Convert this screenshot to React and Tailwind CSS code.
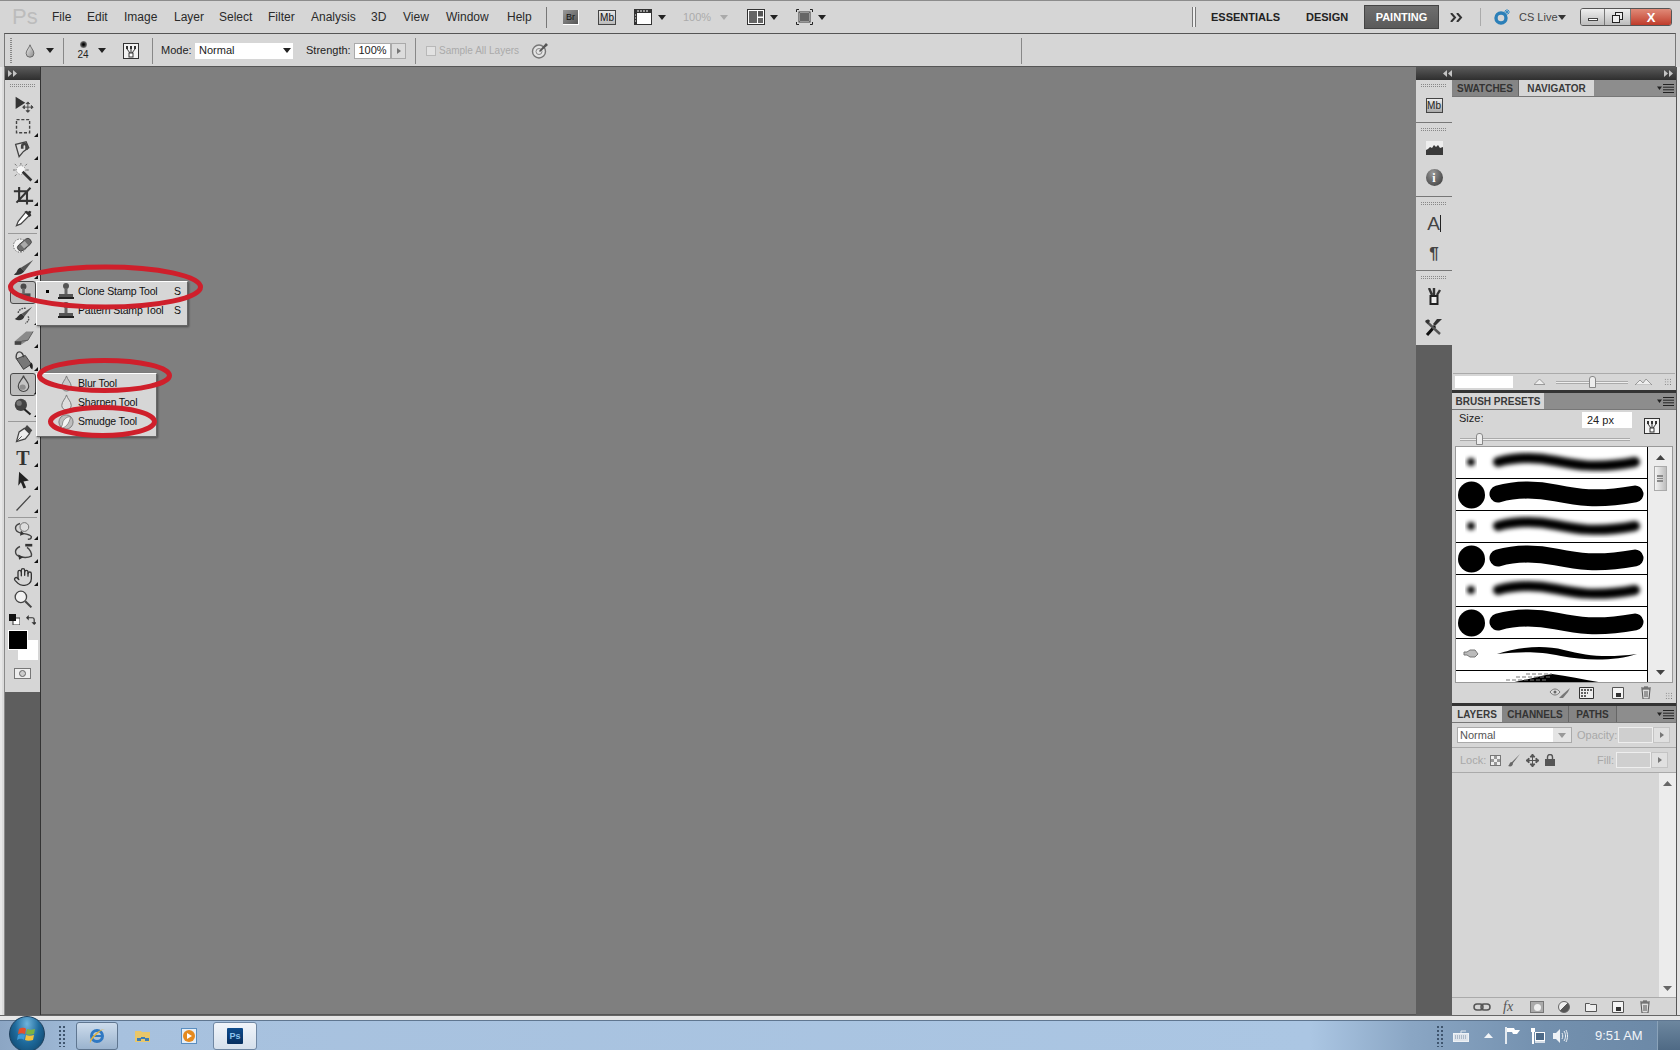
import { Hand } from "lucide-react";

const FONT = "font-['Liberation_Sans',Arial,sans-serif]";

const MENUS = [
    { label: "File", width: "w-[35px]" },
    { label: "Edit", width: "w-[37px]" },
    { label: "Image", width: "w-[50px]" },
    { label: "Layer", width: "w-[45px]" },
    { label: "Select", width: "w-[49px]" },
    { label: "Filter", width: "w-[43px]" },
    { label: "Analysis", width: "w-[60px]" },
    { label: "3D", width: "w-[32px]" },
    { label: "View", width: "w-[43px]" },
    { label: "Window", width: "w-[61px]" },
    { label: "Help", width: "w-[29px]" },
];

const Arrow = ({ className = "", color = "#222" }) => (
    <svg viewBox="0 0 8 5" className={`w-[8px] h-[5px] shrink-0 ${className}`}>
        <path d="M0 0h8L4 5z" fill={color} />
    </svg>
);

const Drop = ({ size = 18, stroke = "#555", fill = "url(#dropFill)" }) => (
    <svg viewBox="0 0 18 18" width={size} height={size}>
        <defs>
            <linearGradient id="dropFill" x1="0" y1="0" x2="1" y2="1">
                <stop offset="0" stopColor="#eee" />
                <stop offset="1" stopColor="#8a8a8a" />
            </linearGradient>
        </defs>
        <path d="M9 1C8 5 4 8 4 12a5 5 0 0 0 10 0C14 8 10 5 9 1z" fill={fill} stroke={stroke} />
    </svg>
);

const Stamp = ({ size = 20 }) => (
    <svg viewBox="0 0 20 20" width={size} height={size}>
        <circle cx="10" cy="4" r="3" fill="#555" />
        <rect x="8.5" y="6" width="3" height="6" fill="#666" />
        <rect x="3" y="12" width="14" height="3" fill="#555" />
        <rect x="2" y="15" width="16" height="2" fill="#222" />
    </svg>
);

const Smudge = ({ size = 18 }) => (
    <svg viewBox="0 0 18 18" width={size} height={size}>
        <circle cx="9" cy="9" r="8" fill="#bdbdbd" stroke="#777" />
        <path d="M14 3C9 3 5 7 5 12l-2 4c5 0 10-5 11-13z" fill="#f4f4f4" stroke="#666" strokeWidth="0.7" />
    </svg>
);

const BrushTip = ({ size = 16 }) => (
    <svg viewBox="0 0 16 16" width={size} height={size}>
        <rect x="0.5" y="0.5" width="15" height="15" fill="#f2f2f2" stroke="#333" />
        <path d="M3 3h2v3H3zM7 3h2v3H7zM11 3h2v3h-2z" fill="#333" />
        <path d="M4 6l3 4M8 6v4M12 6l-3 4" stroke="#333" />
        <rect x="6" y="10" width="4" height="4" fill="#fff" stroke="#333" />
    </svg>
);

const TOOLS = {
    move: (
        <>
            <path d="M3 3l11 7-11 7z" fill="#333" />
            <path d="M17 10v10M12 15h10M17 9l-2 2h4zM17 21l-2-2h4zM11 15l2-2v4zM23 15l-2-2v4z" stroke="#444" strokeWidth="1" fill="#444" />
        </>
    ),
    marquee: <rect x="4" y="3" width="15" height="15" fill="none" stroke="#444" strokeWidth="1.6" strokeDasharray="3.5 2" />,
    lasso: (
        <>
            <path d="M3 5l12-3 3 7-6 4-5 6z" fill="#ddd" stroke="#444" strokeWidth="1.5" />
            <path d="M9 7a4 4 0 0 1 8 0v4h-3V7a1 1 0 0 0-2 0v3H9z" fill="#444" />
        </>
    ),
    wand: (
        <>
            <circle cx="9" cy="8" r="5" fill="#f7f7f7" stroke="#888" strokeDasharray="1.5 1.5" />
            <path d="M3 8H0M9 2V0M15 8h3M4 3L2 1M14 3l2-2M4 13l-2 2" stroke="#666" />
            <path d="M11 10l10 10" stroke="#333" strokeWidth="3" />
        </>
    ),
    crop: (
        <path d="M7 1v16h16M1 6h15v15M20 2L4 19" fill="none" stroke="#333" strokeWidth="2.4" />
    ),
    dropper: (
        <>
            <path d="M15 3l4 4-10 10-5 2 2-5z" fill="#fff" stroke="#444" strokeWidth="1.4" />
            <path d="M13 3l6 6 2-2-1-2 1-2-2-1-2 1-1-1z" fill="#333" />
        </>
    ),
    heal: (
        <>
            <circle cx="8" cy="11" r="7.5" fill="#f5f5f5" stroke="#555" strokeDasharray="1.6 1.6" />
            <rect x="4" y="6" width="18" height="8" rx="4" transform="rotate(-40 13 10)" fill="#6e6e6e" stroke="#444" />
            <rect x="10" y="7" width="6" height="6" transform="rotate(-40 13 10)" fill="#aaa" />
        </>
    ),
    brush: (
        <>
            <path d="M23 1L9 10l4 4z" fill="#555" />
            <path d="M9 10c-3 0-4 3-5 5l-3 3c5 1 10-1 12-4z" fill="#333" />
        </>
    ),
    stamp: (
        <>
            <circle cx="12" cy="5" r="3.4" fill="#4a4a4a" />
            <rect x="10.5" y="7" width="3" height="6" fill="#666" />
            <rect x="4" y="13" width="16" height="4" fill="#4a4a4a" />
        </>
    ),
    history: (
        <>
            <path d="M22 2L10 10l3 3z" fill="#555" />
            <path d="M10 10c-3 0-4 4-8 6 5 3 10 1 11-3z" fill="#333" />
            <path d="M6 9c0-4 6-6 9-5M17 13c2 2 1 6-3 8" fill="none" stroke="#555" strokeWidth="1.6" strokeDasharray="2 1" />
        </>
    ),
    eraser: (
        <>
            <path d="M2 15L15 4h8l-6 10-8 5H2z" fill="#8a8a8a" />
            <path d="M2 15h8l-1 4H2z" fill="#444" />
            <path d="M10 15l7-1 6-10" fill="none" stroke="#555" />
        </>
    ),
    bucket: (
        <>
            <path d="M4 9l10-4 7 10-9 6z" fill="#777" stroke="#333" />
            <path d="M4 9c-1-3 0-8 3-8s5 3 5 6" fill="none" stroke="#444" strokeWidth="1.6" />
            <path d="M21 13c2 2 2 5 1 8-2-1-3-3-3-5z" fill="#222" />
        </>
    ),
    blur: (
        <>
            <path d="M12 2C11 6 6 9 6 14a6 6 0 0 0 12 0C18 9 13 6 12 2z" fill="#c4c4c4" stroke="#444" strokeWidth="1.3" />
            <ellipse cx="11" cy="15" rx="3.5" ry="3" fill="#8d8d8d" />
        </>
    ),
    burn: (
        <>
            <circle cx="9" cy="9" r="7" fill="#444" />
            <circle cx="7" cy="7" r="3" fill="#777" />
            <path d="M13 14l7 6" stroke="#222" strokeWidth="2.4" />
        </>
    ),
    pen: (
        <>
            <path d="M4 20l3-11 6-4 6 6-5 6z" fill="#eee" stroke="#444" strokeWidth="1.4" />
            <path d="M13 5l3-4 6 6-3 4z" fill="#444" />
            <path d="M4 20l6-6" stroke="#444" />
        </>
    ),
    select: <path d="M7 2l11 10-6 1 3 7-3 1-3-7-3 4z" fill="#222" />,
    line: <path d="M4 20L20 3" stroke="#444" strokeWidth="1.5" />,
    rotate: (
        <>
            <circle cx="13" cy="8" r="5" fill="#ddd" stroke="#666" />
            <path d="M8 4C1 6 1 13 9 15c5 1 10 1 12 4 0 2-2 3-4 3" fill="none" stroke="#444" strokeWidth="1.6" />
            <path d="M9 12l-1 6 5-2z" fill="#333" />
        </>
    ),
    orbit: (
        <>
            <path d="M8 4C1 7 1 14 9 16c5 1 10 0 12-1 1-3-2-8-5-10" fill="none" stroke="#444" strokeWidth="1.6" />
            <path d="M6 13l1 6 5-3z" fill="#333" />
            <rect x="14" y="1" width="8" height="3" fill="#333" />
        </>
    ),
    zoom: (
        <>
            <circle cx="9" cy="9" r="6.5" fill="#f2f2f2" stroke="#444" strokeWidth="1.5" />
            <path d="M14 14l7 7" stroke="#444" strokeWidth="2.4" />
        </>
    ),
};

const Tool = ({ name, children, selected, noCorner }) => (
    <div className="relative h-[23px] flex items-center justify-center">
        {selected && (
            <div className="absolute left-[5px] top-0 w-[26px] h-[23px] rounded-[3px] border border-[#4a4a4a] bg-[#bdbdbd]" />
        )}
        <div className="relative ml-[1px] w-[21px] h-[21px] flex items-center justify-center">
            {children || (
                <svg viewBox="0 0 24 24" className="w-[21px] h-[21px]">
                    {TOOLS[name]}
                </svg>
            )}
        </div>
        {!noCorner && (
            <svg viewBox="0 0 4 4" className="absolute left-[29px] bottom-[2px] w-[4px] h-[4px]">
                <path d="M4 0v4H0z" fill="#111" />
            </svg>
        )}
    </div>
);

const ToolSep = () => <div className="mx-[3px] mt-[2px] mb-[1px] h-px bg-[#9a9a9a]" />;

const Grip = ({ className = "" }) => (
    <div className={`flex flex-col gap-[1px] items-center ${className}`}>
        <div className="w-[26px] h-[1px] bg-[repeating-linear-gradient(90deg,#888_0_1px,transparent_1px_2px)]" />
        <div className="w-[26px] h-[1px] bg-[repeating-linear-gradient(90deg,#888_0_1px,transparent_1px_2px)]" />
    </div>
);

const Toolbar = () => (
    <div className="w-[36px] shrink-0 flex flex-col bg-[#5e5e5e] border-r border-r-[#333]">
        <div className="h-[13px] bg-linear-to-b from-[#5a5a5a] to-[#2f2f2f] flex items-center pl-[3px]">
            <DoubleArrows dir="right" />
        </div>
        <div className="h-[612px] bg-[#d6d6d6] flex flex-col">
            <Grip className="mt-[4px] mb-[6px]" />
            <Tool name="move" noCorner />
            <Tool name="marquee" />
            <Tool name="lasso" />
            <Tool name="wand" />
            <Tool name="crop" />
            <Tool name="dropper" />
            <ToolSep />
            <Tool name="heal" />
            <Tool name="brush" />
            <Tool name="stamp" selected />
            <Tool name="history" />
            <Tool name="eraser" />
            <Tool name="bucket" />
            <Tool name="blur" selected />
            <Tool name="burn" />
            <ToolSep />
            <Tool noCorner={false}>
                <svg viewBox="0 0 24 24" className="w-[21px] h-[21px]">{TOOLS.pen}</svg>
            </Tool>
            <Tool>
                <span className="font-['Liberation_Serif',serif] font-bold text-[20px] leading-none text-[#333]">T</span>
            </Tool>
            <Tool name="select" />
            <Tool name="line" />
            <ToolSep />
            <Tool name="rotate" />
            <Tool name="orbit" />
            <Tool>
                <Hand className="w-[20px] h-[20px] text-[#333]" strokeWidth={1.6} />
            </Tool>
            <Tool name="zoom" noCorner />
            {/* default colours + swap */}
            <div className="mt-[1px] h-[15px] flex items-center pl-[4px] gap-[6px]">
                <svg viewBox="0 0 11 11" className="w-[11px] h-[11px]">
                    <rect x="4" y="4" width="7" height="7" fill="#fff" stroke="#333" />
                    <rect x="0" y="0" width="7" height="7" fill="#111" />
                </svg>
                <svg viewBox="0 0 11 11" className="w-[10px] h-[10px]">
                    <path d="M2 3h5a2 2 0 0 1 2 2v4" fill="none" stroke="#333" strokeWidth="1.3" />
                    <path d="M3 0v6L0 3zM6 8h6l-3 3z" fill="#333" />
                </svg>
            </div>
            {/* foreground / background swatches */}
            <div className="relative mt-[3px] h-[31px]">
                <div className="absolute left-[13px] top-[10px] w-[20px] h-[20px] bg-white" />
                <div className="absolute left-[3px] top-0 w-[20px] h-[20px] bg-black border border-white" />
            </div>
            <div className="ml-[9px] mt-[7px] w-[17px] h-[11px] bg-[#eee] border border-[#777] flex items-center justify-center">
                <div className="w-[7px] h-[7px] rounded-full border border-[#666] bg-[#ccc]" />
            </div>
        </div>
    </div>
);

const DoubleArrows = ({ dir }) => (
    <svg viewBox="0 0 9 7" className="w-[9px] h-[7px]">
        {dir === "right" ? (
            <path d="M0 0l4 3.5L0 7zM5 0l4 3.5L5 7z" fill="#c4c4c4" />
        ) : (
            <path d="M4 0v7L0 3.5zM9 0v7L5 3.5z" fill="#c4c4c4" />
        )}
    </svg>
);

const PanelMenu = () => (
    <svg viewBox="0 0 17 9" className="w-[17px] h-[9px]">
        <path d="M0 2.5h5L2.5 6z" fill="#222" />
        <path d="M6 .5h11M6 3.2h11M6 5.8h11M6 8.5h11" stroke="#222" />
    </svg>
);

const Tab = ({ label, active, width }) => (
    <div
        className={`${width} h-full flex items-center justify-center text-[10px] font-bold whitespace-nowrap ${
            active
                ? "bg-[#d6d6d6] text-[#3a3a3a]"
                : "bg-[#858585] text-[#333] border-r border-r-[#666]"
        }`}
    >
        {label}
    </div>
);

const TabBar = ({ children }) => (
    <div className="h-[17px] shrink-0 flex items-stretch bg-[#8d8d8d] border-b border-b-[#777]">
        {children}
        <div className="ml-auto mr-[1px] flex items-center pr-[1px]">
            <PanelMenu />
        </div>
    </div>
);

const ResizeGrip = () => (
    <div className="w-[8px] h-[8px] bg-[radial-gradient(#777_40%,transparent_45%)] bg-size-[2.6px_2.6px]" />
);

const Slider = ({ width, thumb }) => (
    <div className={`relative ${width} h-[3px] bg-[#eee] border-y border-y-[#aaa]`}>
        <div className={`absolute ${thumb} -top-[6px] w-[7px] h-[12px] bg-[#eee] border border-[#888] rounded-t-[3px]`} />
    </div>
);

const WAVE = "M42 15C60 10 80 10 100 14S140 22 179 15";

const BrushRow = ({ kind }) => (
    <div className="h-[32px] shrink-0 border-b border-b-black bg-white">
        <svg viewBox="0 0 191 31" className="w-[191px] h-[31px] block">
            <defs>
                <filter id="softBlur" x="-20%" y="-100%" width="140%" height="300%">
                    <feGaussianBlur stdDeviation="2" />
                </filter>
            </defs>
            {kind === "soft" ? (
                <>
                    <circle cx="15" cy="15" r="4" fill="#000" filter="url(#softBlur)" />
                    <path d={WAVE} fill="none" stroke="#000" strokeWidth="10" strokeLinecap="round" filter="url(#softBlur)" />
                </>
            ) : (
                <>
                    <circle cx="15.5" cy="16" r="13.5" fill="#000" />
                    <path d={WAVE} fill="none" stroke="#000" strokeWidth="17" strokeLinecap="round" />
                </>
            )}
        </svg>
    </div>
);

const BrushList = () => (
    <div className="h-[238px] mx-[3px] flex border border-[#999] bg-[#ececec] overflow-hidden">
        <div className="w-[192px] shrink-0 flex flex-col border-r border-r-black bg-white">
            <BrushRow kind="soft" />
            <BrushRow kind="hard" />
            <BrushRow kind="soft" />
            <BrushRow kind="hard" />
            <BrushRow kind="soft" />
            <BrushRow kind="hard" />
            <div className="h-[32px] shrink-0 border-b border-b-black">
                <svg viewBox="0 0 191 31" className="w-[191px] h-[31px] block">
                    <path d="M8 13h3l3-2h5l3 4-3 3h-5l-3-2H8z" fill="#bbb" stroke="#777" />
                    <path d="M41 15C60 9 85 5 108 11S150 19 181 15C160 22 130 22 105 17S65 13 41 15z" fill="#000" />
                </svg>
            </div>
            <div className="h-[13px] shrink-0">
                <svg viewBox="0 0 191 13" className="w-[191px] h-[13px] block">
                    <path d="M50 12c16-1 30-7 46-9 18 2 36 7 54 9z" fill="#000" />
                    <path d="M60 6h36M70 3h26M50 9h40" stroke="#777" strokeDasharray="4 2" />
                    <path d="M6 12h16" stroke="#777" strokeWidth="2" />
                </svg>
            </div>
        </div>
        <div className="flex-1 flex flex-col items-center">
            <svg viewBox="0 0 9 5" className="mt-[8px] w-[9px] h-[5px]"><path d="M0 5l4.5-5L9 5z" fill="#444" /></svg>
            <div className="mt-[6px] w-[13px] h-[25px] bg-linear-to-r from-[#f4f4f4] to-[#bdbdbd] border border-[#aaa] flex items-center justify-center">
                <div className="w-[6px] h-[7px] border-y-2 border-y-[#888] bg-[linear-gradient(#888,#888)] bg-size-[6px_1px] bg-center bg-no-repeat" />
            </div>
            <svg viewBox="0 0 9 5" className="mt-auto mb-[7px] w-[9px] h-[5px]"><path d="M0 0l4.5 5L9 0z" fill="#444" /></svg>
        </div>
    </div>
);

const TrashIcon = () => (
    <svg viewBox="0 0 12 13" className="w-[12px] h-[13px]">
        <path d="M2 3h8l-1 10H3z" fill="#ddd" stroke="#555" />
        <path d="M1 2h10M4 1h4M5 5v6M7 5v6" stroke="#555" />
    </svg>
);

const NewIcon = () => (
    <svg viewBox="0 0 12 12" className="w-[12px] h-[12px]">
        <path d="M.5.5h11v11H.5z" fill="#f4f4f4" stroke="#555" />
        <path d="M4 6h5v4H4z" fill="#333" />
    </svg>
);

const RightDock = () => (
    <div className="w-[260px] shrink-0 flex flex-col">
        <div className="h-[13px] shrink-0 bg-linear-to-b from-[#5a5a5a] to-[#2f2f2f] flex items-center justify-between pl-[27px] pr-[3px]">
            <DoubleArrows dir="left" />
            <DoubleArrows dir="right" />
        </div>
        <div className="flex-1 flex min-h-0">
            {/* collapsed icon strip */}
            <div className="w-[36px] shrink-0 flex flex-col bg-[#5e5e5e]">
                <div className="h-[43px] bg-[#d6d6d6] border-b border-b-[#777] flex flex-col items-center">
                    <Grip className="mt-[4px]" />
                    <div className="mt-[11px] relative w-[17px] h-[15px] bg-linear-to-b from-[#eee] to-[#aaa] border border-[#444] text-[10px] leading-[14px] text-center text-[#222]">
                        Mb
                    </div>
                </div>
                <div className="h-[74px] bg-[#d6d6d6] border-b border-b-[#777] flex flex-col items-center">
                    <Grip className="mt-[5px]" />
                    <svg viewBox="0 0 17 14" className="mt-[10px] w-[17px] h-[14px]">
                        <rect width="17" height="14" fill="#eee" />
                        <path d="M0 14V9l2-1 2-2 2 1 2-3 2 2 2-2 2 3 3-1v8z" fill="#3a3a3a" />
                    </svg>
                    <div className="mt-[14px] w-[17px] h-[17px] rounded-full bg-radial-[at_40%_25%] from-[#999] to-[#333] flex items-center justify-center text-white font-bold text-[12px] leading-none font-['Liberation_Serif',serif]">
                        i
                    </div>
                </div>
                <div className="h-[74px] bg-[#d6d6d6] border-b border-b-[#777] flex flex-col items-center">
                    <Grip className="mt-[5px]" />
                    <div className="mt-[9px] h-[18px] flex items-center text-[19px] leading-none text-[#444]">
                        A<span className="w-px h-[17px] bg-[#222]" />
                    </div>
                    <div className="mt-[13px] text-[17px] leading-none font-bold text-[#444]">¶</div>
                </div>
                <div className="h-[74px] bg-[#d6d6d6] flex flex-col items-center">
                    <Grip className="mt-[5px]" />
                    <div className="mt-[9px]">
                        <svg viewBox="0 0 16 17" className="w-[16px] h-[17px]">
                            <path d="M3 0l3 7M8 0v7M14 2l-3 5" stroke="#333" strokeWidth="2.4" />
                            <rect x="4.5" y="8" width="7" height="8" fill="#eee" stroke="#222" strokeWidth="2" />
                        </svg>
                    </div>
                    <svg viewBox="0 0 18 18" className="mt-[13px] w-[18px] h-[18px]">
                        <path d="M2 17L10 8" stroke="#111" strokeWidth="3" />
                        <path d="M1 3l14 13" stroke="#555" strokeWidth="2.4" />
                        <path d="M17 1l-7 7-2-2 4-5z" fill="#333" />
                        <path d="M0 3c2-2 4-2 5 0l-2 3z" fill="#333" />
                    </svg>
                </div>
            </div>

            {/* expanded panels */}
            <div className="w-[224px] shrink-0 flex flex-col min-h-0 bg-[#d6d6d6]">
                {/* navigator */}
                <div className="h-[310px] shrink-0 flex flex-col">
                    <TabBar>
                        <Tab label="SWATCHES" width="w-[67px]" />
                        <Tab label="NAVIGATOR" width="w-[75px]" active />
                    </TabBar>
                    <div className="flex-1" />
                    <div className="h-[17px] shrink-0 mx-[1px] border-t border-t-[#aaa] flex items-center pl-[2px] pr-[3px]">
                        <div className="w-[58px] h-[12px] bg-white" />
                        <svg viewBox="0 0 11 6" className="ml-[21px] w-[11px] h-[6px]"><path d="M5.5 0L11 5.5H0z" fill="#eee" stroke="#888" strokeWidth="0.8" /></svg>
                        <div className="ml-[11px]"><Slider width="w-[72px]" thumb="left-[33px]" /></div>
                        <svg viewBox="0 0 17 6" className="ml-[7px] w-[17px] h-[6px]"><path d="M0 6l5-5 3 3 3-4 6 6z" fill="#eee" stroke="#888" strokeWidth="0.8" /></svg>
                        <div className="ml-auto"><ResizeGrip /></div>
                    </div>
                </div>
                <div className="h-[3px] shrink-0 bg-[#333]" />
                {/* brush presets */}
                <div className="h-[310px] shrink-0 flex flex-col">
                    <TabBar>
                        <Tab label="BRUSH PRESETS" width="w-[92px]" active />
                    </TabBar>
                    <div className="h-[36px] shrink-0 relative flex text-[11px] text-[#222] pl-[7px]">
                        <div className="mt-[2px] h-[13px] leading-[13px]">Size:</div>
                        <div className="absolute left-[130px] top-[2px] w-[50px] h-[16px] bg-white pl-[5px] text-[11px] leading-[16px]">24 px</div>
                        <div className="absolute left-[192px] top-[8px]"><BrushTip /></div>
                        <div className="absolute left-[8px] top-[28px]"><Slider width="w-[170px]" thumb="left-[16px]" /></div>
                    </div>
                    <BrushList />
                    <div className="h-[20px] shrink-0 relative">
                        <svg viewBox="0 0 22 12" className="absolute left-[97px] top-[4px] w-[22px] h-[12px]">
                            <path d="M1 5c3-4 7-4 10 0-3 4-7 4-10 0z" fill="#ddd" stroke="#777" />
                            <circle cx="6" cy="5" r="1.5" fill="#666" />
                            <path d="M21 1l-8 7-3 3h4l5-6z" fill="#777" />
                        </svg>
                        <svg viewBox="0 0 15 12" className="absolute left-[127px] top-[4px] w-[15px] h-[12px]">
                            <path d="M.5.5h14v11H.5z" fill="#eee" stroke="#333" />
                            <path d="M2 3h11M2 6h7M2 9h5" stroke="#333" strokeWidth="1.5" strokeDasharray="2 1" />
                        </svg>
                        <div className="absolute left-[160px] top-[4px]"><NewIcon /></div>
                        <div className="absolute left-[188px] top-[3px]"><TrashIcon /></div>
                        <div className="absolute right-[3px] bottom-[3px]"><ResizeGrip /></div>
                    </div>
                </div>
                <div className="h-[3px] shrink-0 bg-[#333]" />
                {/* layers */}
                <div className="flex-1 min-h-0 flex flex-col">
                    <TabBar>
                        <Tab label="LAYERS" width="w-[50px]" active />
                        <Tab label="CHANNELS" width="w-[67px]" />
                        <Tab label="PATHS" width="w-[48px]" />
                    </TabBar>
                    <div className="h-[24px] shrink-0 flex items-center pl-[5px] text-[11px]">
                        <div className="w-[115px] h-[16px] flex border border-[#aaa] bg-[#e4e4e4]">
                            <div className="w-[95px] bg-white pl-[2px] leading-[14px] text-[#555]">Normal</div>
                            <div className="flex-1 flex items-center justify-center"><Arrow color="#999" /></div>
                        </div>
                        <div className="ml-[5px] w-[41px] text-[#a8a8a8]">Opacity:</div>
                        <div className="w-[35px] h-[16px] bg-[#cfcfcf] border border-[#eee]" />
                        <div className="w-[17px] h-[16px] bg-[#e0e0e0] border border-[#c4c4c4] flex items-center justify-center">
                            <svg viewBox="0 0 4 6" className="w-[4px] h-[6px]"><path d="M0 0l4 3-4 3z" fill="#777" /></svg>
                        </div>
                    </div>
                    <div className="h-[26px] shrink-0 flex items-center pl-[8px] border-y border-y-[#aaa] text-[11px] text-[#a8a8a8]">
                        <div className="w-[30px]">Lock:</div>
                        <div className="w-[11px] h-[11px] border border-[#777] bg-[repeating-conic-gradient(#999_0_25%,#eee_0_50%)] bg-size-[6px_6px]" />
                        <svg viewBox="0 0 14 14" className="ml-[6px] w-[14px] h-[14px]"><path d="M13 1L5 9l1 1zM5 9c-3 0-2 3-4 4 3 1 5 0 5-3z" fill="#666" /></svg>
                        <svg viewBox="0 0 13 13" className="ml-[5px] w-[13px] h-[13px]"><path d="M6.5 0v13M0 6.5h13M6.5 0L4 3h5zM6.5 13L4 10h5zM0 6.5L3 4v5zM13 6.5L10 4v5z" stroke="#555" fill="#555" /></svg>
                        <svg viewBox="0 0 10 12" className="ml-[6px] w-[10px] h-[12px]"><rect y="5" width="10" height="7" fill="#555" /><path d="M2.5 5V3a2.5 2.5 0 0 1 5 0v2" fill="none" stroke="#555" strokeWidth="1.4" /></svg>
                        <div className="ml-[42px] w-[19px]">Fill:</div>
                        <div className="w-[35px] h-[16px] bg-[#cfcfcf] border border-[#eee]" />
                        <div className="w-[17px] h-[16px] bg-[#e0e0e0] border border-[#c4c4c4] flex items-center justify-center">
                            <svg viewBox="0 0 4 6" className="w-[4px] h-[6px]"><path d="M0 0l4 3-4 3z" fill="#777" /></svg>
                        </div>
                    </div>
                    <div className="flex-1 flex min-h-0">
                        <div className="flex-1" />
                        <div className="w-[17px] bg-[#ececec] flex flex-col items-center">
                            <svg viewBox="0 0 9 5" className="mt-[8px] w-[9px] h-[5px]"><path d="M0 5l4.5-5L9 5z" fill="#666" /></svg>
                            <svg viewBox="0 0 9 5" className="mt-auto mb-[6px] w-[9px] h-[5px]"><path d="M0 0l4.5 5L9 0z" fill="#666" /></svg>
                        </div>
                    </div>
                    <div className="h-[18px] shrink-0 border-t border-t-[#aaa] relative">
                        <svg viewBox="0 0 18 8" className="absolute left-[21px] top-[5px] w-[18px] h-[8px]">
                            <rect x="1" y="1" width="9" height="6" rx="3" fill="none" stroke="#555" strokeWidth="1.5" />
                            <rect x="8" y="1" width="9" height="6" rx="3" fill="none" stroke="#555" strokeWidth="1.5" />
                        </svg>
                        <span className="absolute left-[51px] top-[1px] font-['Liberation_Serif',serif] italic text-[14px] leading-[16px] text-[#555]">fx</span>
                        <div className="absolute left-[78px] top-[3px] w-[14px] h-[12px] bg-[#aaa] border border-[#777] flex items-center justify-center">
                            <div className="w-[7px] h-[7px] rounded-full bg-[#eee]" />
                        </div>
                        <div className="absolute left-[106px] top-[3px] w-[12px] h-[12px] rounded-full bg-[linear-gradient(135deg,#eee_50%,#555_50%)] border border-[#666]" />
                        <svg viewBox="0 0 12 10" className="absolute left-[133px] top-[4px] w-[12px] h-[10px]"><path d="M.5 1.5h4l1 1h6v7H.5z" fill="#eee" stroke="#555" /></svg>
                        <div className="absolute left-[160px] top-[3px]"><NewIcon /></div>
                        <div className="absolute left-[187px] top-[2px]"><TrashIcon /></div>
                    </div>
                </div>
            </div>
        </div>
    </div>
);

const TitleBar = () => (
    <div className="h-[33px] shrink-0 flex items-center bg-[#d6d6d6] border-t border-t-[#8c8c8c] pl-[12px] pr-[8px] text-[12px] text-[#2a2a2a]">
        <div className="w-[23px] font-normal text-[22px] text-[#bcbcbc] leading-none">Ps</div>
        <div className="ml-[17px] flex">
            {MENUS.map((m) => (
                <div key={m.label} className={`${m.width} whitespace-nowrap`}>{m.label}</div>
            ))}
        </div>
        <div className="ml-[10px] w-px h-[21px] bg-[#777]" />
        <div className="ml-[16px] w-[16px] h-[15px] bg-linear-to-br from-[#999] to-[#555] text-[9px] leading-[15px] text-center text-[#111] border-r border-b border-white">Br</div>
        <div className="ml-[19px] w-[18px] h-[15px] bg-linear-to-b from-[#e8e8e8] to-[#bbb] border border-[#444] text-[10px] leading-[13px] text-center text-[#111]">Mb</div>
        <svg viewBox="0 0 18 16" className="ml-[18px] w-[18px] h-[16px]">
            <rect x="0.5" y="0.5" width="17" height="15" fill="#fff" stroke="#333" />
            <rect x="0" y="0" width="18" height="4" fill="#333" />
            <rect x="0" y="0" width="3" height="16" fill="#333" />
            <path d="M4 1v2M7 1v2M10 1v2M13 1v2M1 6h1M1 9h1M1 12h1" stroke="#fff" />
        </svg>
        <Arrow className="ml-[6px]" />
        <div className="ml-[17px] w-[29px] text-[11px] text-[#ababab]">100%</div>
        <Arrow className="ml-[8px]" color="#aaa" />
        <svg viewBox="0 0 18 16" className="ml-[19px] w-[18px] h-[16px]">
            <rect x="0.5" y="0.5" width="17" height="15" fill="#fff" stroke="#333" />
            <rect x="2" y="2" width="8" height="12" fill="#666" />
            <rect x="11" y="2" width="5" height="5.5" fill="#555" />
            <rect x="11" y="9" width="5" height="5" fill="#666" />
        </svg>
        <Arrow className="ml-[5px]" />
        <svg viewBox="0 0 17 16" className="ml-[18px] w-[17px] h-[16px]">
            <path d="M.5 3V.5H3M14 .5h2.5V3M16.5 13v2.5H14M3 15.5H.5V13" fill="none" stroke="#222" />
            <rect x="3" y="3" width="11" height="10" fill="#fff" stroke="#333" />
            <rect x="4" y="4" width="9" height="8" fill="#666" />
        </svg>
        <Arrow className="ml-[5px]" />

        <div className="ml-auto w-[4px] h-[20px] border-x border-x-[#777] bg-[#eee]" />
        <div className="ml-[15px] w-[69px] text-[11px] font-bold text-[#222] whitespace-nowrap">ESSENTIALS</div>
        <div className="ml-[26px] w-[42px] text-[11px] font-bold text-[#222]">DESIGN</div>
        <div className="ml-[16px] w-[75px] h-[24px] bg-linear-to-b from-[#6f6f6f] to-[#5a5a5a] border border-[#444] flex items-center justify-center text-[11px] font-bold text-white">PAINTING</div>
        <svg viewBox="0 0 13 9" className="ml-[11px] w-[13px] h-[9px]">
            <path d="M1 0l4 4.5L1 9M7 0l4 4.5L7 9" fill="none" stroke="#333" strokeWidth="2" />
        </svg>
        <div className="ml-[17px] w-px h-[18px] bg-[#aaa]" />
        <svg viewBox="0 0 16 16" className="ml-[13px] w-[16px] h-[16px]">
            <circle cx="7" cy="9" r="5" fill="none" stroke="#2b7fb8" strokeWidth="3.4" />
            <path d="M13 0v6M10 3h6M11 1l4 4M15 1l-4 4" stroke="#3c8ec4" />
        </svg>
        <div className="ml-[9px] w-[37px] text-[11px] text-[#444] whitespace-nowrap">CS Live</div>
        <Arrow className="ml-[2px]" color="#333" />
        <div className="ml-[14px] w-[92px] h-[18px] flex rounded-[3px] border border-[#555] overflow-hidden">
            <div className="w-[24px] bg-linear-to-b from-[#efefef] to-[#bcbcbc] border-r border-r-[#777] flex items-center justify-center">
                <div className="mt-[5px] w-[10px] h-[3px] bg-white border border-[#444]" />
            </div>
            <div className="w-[26px] bg-linear-to-b from-[#efefef] to-[#bcbcbc] border-r border-r-[#777] flex items-center justify-center">
                <svg viewBox="0 0 11 11" className="w-[11px] h-[11px]">
                    <rect x="3.5" y="0.5" width="7" height="7" fill="#eee" stroke="#222" />
                    <rect x="0.5" y="3.5" width="7" height="7" fill="#eee" stroke="#222" />
                </svg>
            </div>
            <div className="flex-1 bg-linear-to-b from-[#e08a78] to-[#bf3a2a] flex items-center justify-center text-white text-[13px] font-bold leading-none">X</div>
        </div>
    </div>
);

const OptionsBar = () => (
    <div className="h-[34px] shrink-0 flex">
        <div className="w-[4px] shrink-0 bg-[#d6d6d6]" />
        <div className="flex-1 flex items-center pt-[1px] bg-[#d6d6d6] border-y border-y-[#555] border-l border-l-[#777] border-r border-r-[#777] text-[11px] text-[#222]">
            <div className="ml-[5px] h-[25px] w-[2px] bg-[repeating-linear-gradient(#888_0_1px,transparent_1px_2px)]" />
            <div className="ml-[11px] w-[14px] flex justify-center"><Drop size={22} /></div>
            <Arrow className="ml-[9px]" />
            <div className="ml-[9px] w-px h-[26px] bg-[#888]" />
            <div className="ml-[10px] w-[18px] flex flex-col items-center">
                <div className="w-[7px] h-[7px] rounded-full bg-radial from-black to-[#d6d6d6]" />
                <div className="mt-[1px] text-[10px] leading-[11px]">24</div>
            </div>
            <Arrow className="ml-[6px]" />
            <div className="ml-[17px]"><BrushTip /></div>
            <div className="ml-[13px] w-px h-[26px] bg-[#888]" />
            <div className="ml-[8px] w-[29px]">Mode:</div>
            <div className="ml-[5px] w-[98px] h-[16px] bg-white flex items-center justify-between px-[4px] pr-[2px]">
                <span>Normal</span>
                <Arrow />
            </div>
            <div className="ml-[13px] w-[44px]">Strength:</div>
            <div className="ml-[4px] w-[37px] h-[16px] bg-white border border-[#aaa] flex items-center justify-center">100%</div>
            <div className="w-[15px] h-[16px] bg-[#dcdcdc] border border-[#aaa] flex items-center justify-center">
                <svg viewBox="0 0 4 6" className="w-[4px] h-[6px]"><path d="M0 0l4 3-4 3z" fill="#777" /></svg>
            </div>
            <div className="ml-[9px] w-px h-[26px] bg-[#888]" />
            <div className="ml-[10px] w-[10px] h-[10px] border border-[#b8b8b8] bg-[#e2e2e2]" />
            <div className="ml-[3px] w-[78px] whitespace-nowrap text-[#aaa] text-[10px]">Sample All Layers</div>
            <svg viewBox="0 0 17 17" className="ml-[14px] w-[17px] h-[17px]">
                <circle cx="8" cy="9.5" r="6.5" fill="#e4e4e4" stroke="#777" strokeWidth="1.4" />
                <circle cx="8" cy="9.5" r="3" fill="none" stroke="#888" />
                <path d="M8 9L15 1l2 2-8 7z" fill="#555" />
            </svg>
            <div className="ml-[473px] w-px h-[26px] bg-[#888]" />
        </div>
        <div className="w-[4px] shrink-0 bg-[#d6d6d6]" />
    </div>
);

const FlyoutRow = ({ icon, label, shortcut, bullet }) => (
    <div className="h-[19px] flex items-center">
        <div className="w-[19px] shrink-0">
            {bullet && <div className="w-[3px] h-[3px] bg-black ml-[9px]" />}
        </div>
        <div className="w-[20px] mr-[2px] shrink-0 flex justify-center">{icon}</div>
        <div className="text-[10.5px] tracking-[-0.2px] text-[#111] whitespace-nowrap">{label}</div>
        {shortcut && <div className="ml-auto mr-[6px] text-[10.5px] text-[#111]">{shortcut}</div>}
    </div>
);

const Flyouts = () => (
    <>
        <div className="absolute left-[36px] top-[281px] w-[152px] h-[45px] bg-[#d6d6d6] border-t border-l border-t-white border-l-white border-r border-b border-r-[#666] border-b-[#666] shadow-[1px_1px_2px_rgba(0,0,0,0.4)]">
            <FlyoutRow icon={<Stamp />} label="Clone Stamp Tool" shortcut="S" bullet />
            <FlyoutRow icon={<Stamp />} label="Pattern Stamp Tool" shortcut="S" />
        </div>
        <div className="absolute left-[36px] top-[373px] w-[121px] h-[64px] bg-[#d6d6d6] border-t border-l border-t-white border-l-white border-r border-b border-r-[#666] border-b-[#666] shadow-[1px_1px_2px_rgba(0,0,0,0.4)]">
            <FlyoutRow icon={<Drop size={17} stroke="#777" fill="#c8c8c8" />} label="Blur Tool" />
            <FlyoutRow icon={<Drop size={17} stroke="#777" fill="#dedede" />} label="Sharpen Tool" />
            <FlyoutRow icon={<Smudge size={16} />} label="Smudge Tool" />
        </div>
        <svg viewBox="0 0 210 195" className="absolute left-0 top-[255px] w-[210px] h-[195px] pointer-events-none">
            <g fill="none" stroke="#cf1f2b" strokeWidth="5">
                <ellipse cx="105.5" cy="32" rx="95" ry="20" />
                <ellipse cx="104.5" cy="120.5" rx="65" ry="15" />
                <ellipse cx="102.5" cy="166.5" rx="52" ry="14" />
            </g>
        </svg>
    </>
);

const TrayGrip = () => (
    <div className="w-[8px] h-[22px] bg-[radial-gradient(#3f556e_45%,transparent_50%)] bg-size-[4px_4px]" />
);

const Taskbar = () => (
    <div className="h-[30px] shrink-0 flex items-center relative bg-[linear-gradient(90deg,#8ca6c4_0%,#a7c1de_6%,#abc6e3_78%,#8aa6c4_84%,#7390ae_92%,#6b88a6_100%)] border-t border-t-[#5f7690]">
        {/* start orb */}
        <div className="absolute left-[9px] -top-[5px] w-[36px] h-[36px] rounded-full bg-radial-[at_50%_20%] from-[#6fb4dc] via-[#1e6a9c] to-[#0e3f63] border border-[#1d3f5c] flex items-center justify-center">
            <svg viewBox="0 0 20 20" className="w-[20px] h-[20px]">
                <path d="M2 5c2-1 5-2 7 0l-1 5c-2-1-5-1-7 0z" fill="#e2502c" />
                <path d="M10 5c2 1 5 1 8 0l-1 5c-3 1-6 1-8 0z" fill="#7cb342" />
                <path d="M1 11c2-1 5-1 7 0l-1 5c-2-2-5-1-7 0z" fill="#3e9ad6" />
                <path d="M9 11c2 1 5 1 8 0l-1 5c-3 1-6 1-8 0z" fill="#f3c23c" />
            </svg>
        </div>
        <div className="ml-[58px]"><TrayGrip /></div>
        <div className="ml-[10px] w-[42px] h-[28px] rounded-[3px] border border-[#5f7690] bg-linear-to-b from-[#cddcec] to-[#9ab3ce] flex items-center justify-center">
            <svg viewBox="0 0 18 18" className="w-[18px] h-[18px]">
                <circle cx="9" cy="9" r="5.5" fill="none" stroke="#2f78c2" strokeWidth="3" />
                <path d="M4 9h11" stroke="#2f78c2" strokeWidth="2" />
                <path d="M2 16C1 11 11 2 17 2c-3 0-12 8-15 14z" fill="#e3b23c" />
            </svg>
        </div>
        <div className="ml-[17px] w-[16px] flex justify-center">
            <svg viewBox="0 0 16 14" className="w-[16px] h-[14px]">
                <path d="M0 2h6l1 1h8v10H0z" fill="#e9c76a" />
                <path d="M2 9h4v3H2zM10 9h4v3h-4z" fill="#3d7db5" />
                <path d="M6 9h4" stroke="#3d7db5" strokeWidth="2" />
            </svg>
        </div>
        <div className="ml-[30px] w-[16px] h-[16px] border border-[#5a8ec0] bg-[#e6eef6] flex items-center justify-center">
            <div className="w-[12px] h-[12px] rounded-full bg-[#e58a1e] flex items-center justify-center">
                <svg viewBox="0 0 5 6" className="w-[5px] h-[6px]"><path d="M0 0l5 3-5 3z" fill="#fff" /></svg>
            </div>
        </div>
        <div className="ml-[16px] w-[44px] h-[28px] rounded-[3px] border border-[#6f87a3] bg-linear-to-b from-[#f1f5fa] to-[#d5e0ec] flex items-center justify-center">
            <div className="w-[16px] h-[16px] bg-linear-to-b from-[#0e4c8c] to-[#072f5f] rounded-[1px] text-[9px] leading-[16px] text-center text-[#8cc4ee] font-bold">Ps</div>
        </div>

        <div className="ml-auto"><TrayGrip /></div>
        <svg viewBox="0 0 16 12" className="ml-[9px] w-[16px] h-[12px]">
            <rect x="0.5" y="3.5" width="15" height="8" fill="#dfe5ec" stroke="#eef2f6" />
            <path d="M2 6h12M2 8h12" stroke="#7a8ea5" strokeDasharray="1 1" />
            <path d="M8 3V1h5" stroke="#dfe5ec" fill="none" />
        </svg>
        <svg viewBox="0 0 9 5" className="ml-[15px] w-[9px] h-[5px]"><path d="M0 5l4.5-5L9 5z" fill="#f2f5f8" /></svg>
        <svg viewBox="0 0 16 17" className="ml-[12px] w-[16px] h-[17px]">
            <path d="M1 0v17" stroke="#fff" strokeWidth="1.6" />
            <path d="M2 1h7l1 2h5l-3 4h-4l-1-2H2z" fill="#fff" />
        </svg>
        <svg viewBox="0 0 15 16" className="ml-[9px] w-[15px] h-[16px]">
            <path d="M1 0h4v4H4v12H2V4H1z" fill="#fff" />
            <rect x="5.5" y="4.5" width="9" height="8" fill="#4d6a88" stroke="#fff" />
            <path d="M5 14h10" stroke="#fff" strokeWidth="1.4" />
        </svg>
        <svg viewBox="0 0 15 14" className="ml-[8px] w-[15px] h-[14px]">
            <path d="M0 4h3l4-4v14l-4-4H0z" fill="#eef2f6" />
            <path d="M9 4c1 2 1 4 0 6M11 2c2 3 2 7 0 10M13 1c2 4 2 8 0 12" stroke="#eef2f6" fill="none" />
        </svg>
        <div className="ml-[27px] w-[44px] text-[13px] text-[#f1f4f8] whitespace-nowrap">9:51 AM</div>
        <div className="ml-[18px] w-[23px] h-full bg-linear-to-b from-[#6d879f] to-[#4f6a85] border-l border-l-[#8ba3ba]" />
    </div>
);

const App = () => {
    return (
        <div className={`relative w-[1680px] h-[1050px] overflow-hidden flex flex-col bg-[#e2e2e2] ${FONT}`}>
            <TitleBar />
            <OptionsBar />
            <div className="flex-1 min-h-0 flex">
                <div className="w-[5px] shrink-0 bg-[#dcdcdc] border-l-[2px] border-l-[#e8e8e8] border-r-[1px] border-r-[#8a8a8a]" />
                <Toolbar />
                <div className="flex-1 bg-[#7f7f7f] border-b border-b-[#555]" />
                <RightDock />
                <div className="w-[4px] shrink-0 bg-[#e2e2e2] border-l border-l-[#555]" />
            </div>
            <div className="h-[5px] shrink-0 bg-[#e6e6e6] border-t border-t-[#666]" />
            <Taskbar />
            <Flyouts />
        </div>
    );
};

export default App;
